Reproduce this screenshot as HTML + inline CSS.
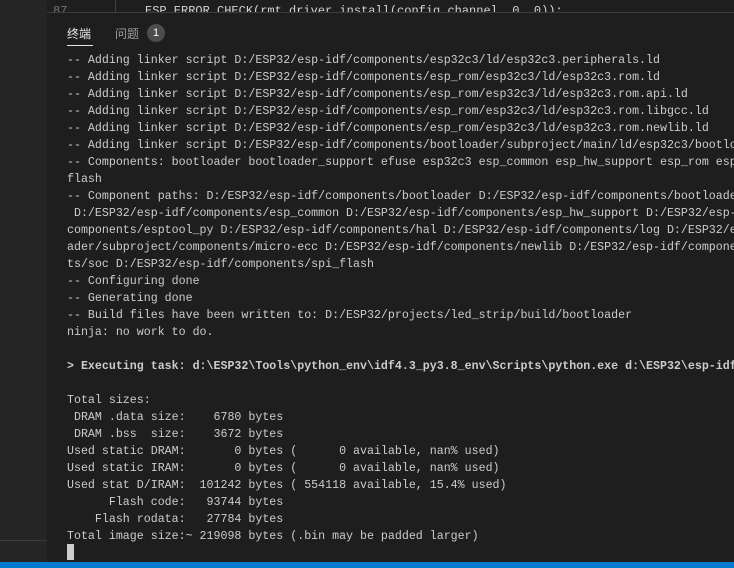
<!DOCTYPE html>
<html><head><meta charset="utf-8"><style>
*{margin:0;padding:0;box-sizing:border-box}
body{width:734px;height:568px;background:#1e1e1e;overflow:hidden;position:relative;font-family:"Liberation Mono",monospace}
#side{position:absolute;left:0;top:0;width:47px;height:562px;background:#252526}
#sideline{position:absolute;left:0;top:540px;width:47px;height:1px;background:#3c3c3c}
#editor{position:absolute;left:47px;top:0;width:687px;height:12px;background:#1e1e1e;overflow:hidden}
#gutter{position:absolute;left:68px;top:0;width:1px;height:12px;background:#404040}
.ln{position:absolute;left:6px;top:4px;color:#6e7681;font-size:12px}
.code{position:absolute;left:98px;top:4px;color:#d4d4d4;font-size:12px;white-space:pre}
#sep{position:absolute;left:47px;top:12px;width:687px;height:1px;background:#3c3c3c}
#panel{position:absolute;left:47px;top:13px;width:687px;height:549px;background:#1e1e1e}
.tab{position:absolute;top:12px;font-family:"Liberation Sans","Noto Sans CJK SC",sans-serif;font-size:12px}
#t1{left:20px;color:#e7e7e7}
#t1u{position:absolute;left:20px;top:32px;width:26px;height:1px;background:#e7e7e7}
#t2{left:68px;color:#9d9d9d}
#badge{position:absolute;left:100px;top:11px;width:18px;height:18px;border-radius:9px;background:#4d4d4d;color:#fff;font-family:"Liberation Sans",sans-serif;font-size:11px;text-align:center;line-height:18px}
#term{position:absolute;left:67px;top:52px;width:667px;overflow:hidden;color:#cccccc;font-size:11.63px;line-height:17px;white-space:pre}
b{font-weight:bold}
#cursor{position:absolute;left:67px;top:544px;width:7px;height:16px;background:#cccccc}
#status{position:absolute;left:0;top:562px;width:734px;height:6px;background:#007acc}
</style></head><body>
<div id="side"></div><div id="sideline"></div>
<div id="editor"><div class="ln">87</div><div id="gutter"></div><div class="code">ESP_ERROR_CHECK(rmt_driver_install(config.channel, 0, 0));</div></div>
<div id="sep"></div>
<div id="panel">
<div class="tab" id="t1">终端</div><div id="t1u"></div>
<div class="tab" id="t2">问题</div><div id="badge">1</div>
</div>
<div id="term">-- Adding linker script D:/ESP32/esp-idf/components/esp32c3/ld/esp32c3.peripherals.ld
-- Adding linker script D:/ESP32/esp-idf/components/esp_rom/esp32c3/ld/esp32c3.rom.ld
-- Adding linker script D:/ESP32/esp-idf/components/esp_rom/esp32c3/ld/esp32c3.rom.api.ld
-- Adding linker script D:/ESP32/esp-idf/components/esp_rom/esp32c3/ld/esp32c3.rom.libgcc.ld
-- Adding linker script D:/ESP32/esp-idf/components/esp_rom/esp32c3/ld/esp32c3.rom.newlib.ld
-- Adding linker script D:/ESP32/esp-idf/components/bootloader/subproject/main/ld/esp32c3/bootloader.ld
-- Components: bootloader bootloader_support efuse esp32c3 esp_common esp_hw_support esp_rom esptool_py
flash
-- Component paths: D:/ESP32/esp-idf/components/bootloader D:/ESP32/esp-idf/components/bootloader_support
 D:/ESP32/esp-idf/components/esp_common D:/ESP32/esp-idf/components/esp_hw_support D:/ESP32/esp-idf/
components/esptool_py D:/ESP32/esp-idf/components/hal D:/ESP32/esp-idf/components/log D:/ESP32/esp-idf
ader/subproject/components/micro-ecc D:/ESP32/esp-idf/components/newlib D:/ESP32/esp-idf/components/
ts/soc D:/ESP32/esp-idf/components/spi_flash
-- Configuring done
-- Generating done
-- Build files have been written to: D:/ESP32/projects/led_strip/build/bootloader
ninja: no work to do.

<b>&gt; Executing task: d:\ESP32\Tools\python_env\idf4.3_py3.8_env\Scripts\python.exe d:\ESP32\esp-idf</b>

Total sizes:
 DRAM .data size:    6780 bytes
 DRAM .bss  size:    3672 bytes
Used static DRAM:       0 bytes (      0 available, nan% used)
Used static IRAM:       0 bytes (      0 available, nan% used)
Used stat D/IRAM:  101242 bytes ( 554118 available, 15.4% used)
      Flash code:   93744 bytes
    Flash rodata:   27784 bytes
Total image size:~ 219098 bytes (.bin may be padded larger)</div>
<div id="cursor"></div>
<div id="status"></div>
</body></html>
